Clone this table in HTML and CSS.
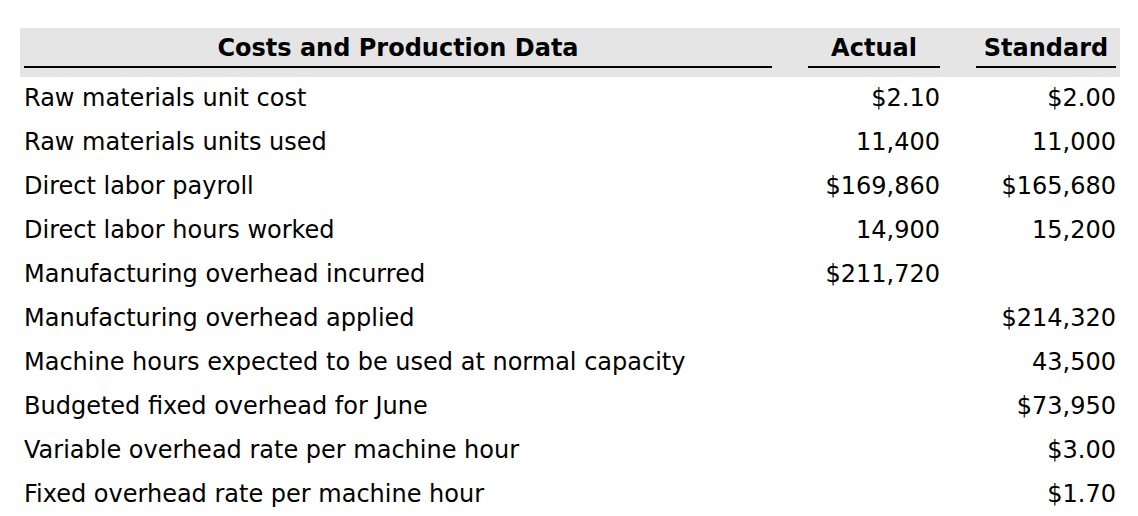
FILE: index.html
```html
<!DOCTYPE html>
<html>
<head>
<meta charset="utf-8">
<link rel="stylesheet" href="styles.css">
</head>
<body>
<table class="data">
  <colgroup>
    <col class="c-label">
    <col class="c-actual">
    <col class="c-std">
  </colgroup>
  <thead>
    <tr class="head">
      <th class="h-label"><div class="h-in">Costs and Production Data</div></th>
      <th class="h-num"><div class="h-in">Actual</div></th>
      <th class="h-num"><div class="h-in">Standard</div></th>
    </tr>
  </thead>
  <tbody>
    <tr><td class="lbl">Raw materials unit cost</td><td class="num">$2.10</td><td class="num">$2.00</td></tr>
    <tr><td class="lbl">Raw materials units used</td><td class="num">11,400</td><td class="num">11,000</td></tr>
    <tr><td class="lbl">Direct labor payroll</td><td class="num">$169,860</td><td class="num">$165,680</td></tr>
    <tr><td class="lbl">Direct labor hours worked</td><td class="num">14,900</td><td class="num">15,200</td></tr>
    <tr><td class="lbl">Manufacturing overhead incurred</td><td class="num">$211,720</td><td class="num"></td></tr>
    <tr><td class="lbl">Manufacturing overhead applied</td><td class="num"></td><td class="num">$214,320</td></tr>
    <tr><td class="lbl">Machine hours expected to be used at normal capacity</td><td class="num"></td><td class="num">43,500</td></tr>
    <tr><td class="lbl">Budgeted fixed overhead for June</td><td class="num"></td><td class="num">$73,950</td></tr>
    <tr><td class="lbl">Variable overhead rate per machine hour</td><td class="num"></td><td class="num">$3.00</td></tr>
    <tr><td class="lbl">Fixed overhead rate per machine hour</td><td class="num"></td><td class="num">$1.70</td></tr>
  </tbody>
</table>
</body>
</html>
```

FILE: styles.css
```css
html, body {
  margin: 0;
  padding: 0;
  background: #ffffff;
}

body {
  padding: 28px 0 0 20px;
  font-family: "DejaVu Sans", Verdana, sans-serif;
  font-size: 24px;
  color: #000000;
}

.data {
  border-collapse: collapse;
  border-spacing: 0;
  table-layout: fixed;
  width: 1100px;
}

.c-label { width: 756px; }
.c-actual { width: 168px; }
.c-std { width: 176px; }

.head {
  background: #e5e5e5;
}

.head th {
  font-weight: bold;
  text-align: center;
  padding: 5px 4px 9px 4px;
  vertical-align: top;
}

.head th.h-num {
  padding-left: 32px;
}

.h-in {
  line-height: 30px;
  padding-bottom: 3px;
  border-bottom: 2px solid #000000;
}

td {
  line-height: 40px;
  padding: 1px 4px 3px 4px;
  white-space: nowrap;
}

td.num {
  text-align: right;
  padding-left: 32px;
}
```
